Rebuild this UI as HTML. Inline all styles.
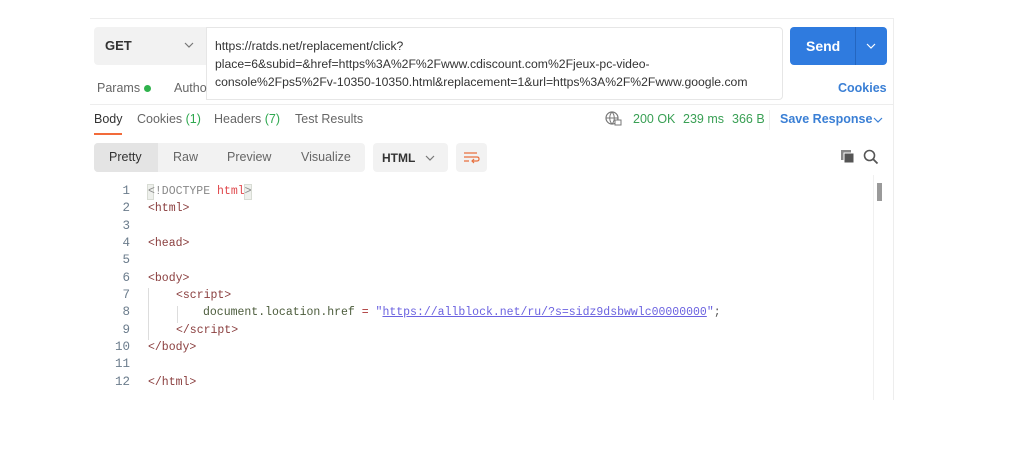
<!DOCTYPE html>
<html><head><style>
*{margin:0;padding:0;box-sizing:border-box}
body{width:1024px;height:474px;background:#fff;font-family:"Liberation Sans",sans-serif;position:relative;overflow:hidden;color:#212121}
.a{position:absolute;white-space:nowrap}
.code{font-family:"Liberation Mono",monospace;font-size:11.5px;}
.ln{position:absolute;width:40px;text-align:right;left:90px;color:#6b7c8c;font-family:"Liberation Mono",monospace;font-size:12.5px}
.tag{color:#8a3e3e}
</style></head><body>
<div class="a" style="left:90px;top:18px;width:803px;height:1px;background:#ededed"></div>
<div class="a" style="left:893px;top:18px;width:1px;height:382px;background:#ededed"></div>
<div class="a" style="left:90px;top:104px;width:803px;height:1px;background:#ededed"></div>
<div class="a" style="left:873px;top:175px;width:1px;height:225px;background:#f0f0f0"></div>

<div class="a" style="left:94px;top:27px;width:112px;height:38px;background:#f2f2f2;border-radius:4px 0 0 4px"></div>
<div class="a" style="left:105px;top:38px;font-size:13px;font-weight:bold;color:#333">GET</div>
<svg class="a" style="left:184px;top:42px" width="10" height="7"><path d="M1 1l4 4 4-4" fill="none" stroke="#777" stroke-width="1.2"/></svg>
<div class="a" style="left:206px;top:27px;width:577px;height:73px;background:#fff;border:1px solid #e6e6e6;border-radius:0 4px 4px 0"></div>
<div class="a" style="left:215px;top:37px;font-size:12.2px;line-height:18px;color:#333">https://ratds.net/replacement/click?<br>place=6&amp;subid=&amp;href=https%3A%2F%2Fwww.cdiscount.com%2Fjeux-pc-video-<br>console%2Fps5%2Fv-10350-10350.html&amp;replacement=1&amp;url=https%3A%2F%2Fwww.google.com</div>
<div class="a" style="left:790px;top:27px;width:97px;height:38px;background:#2f7bdf;border-radius:4px"></div>
<div class="a" style="left:855px;top:27px;width:1px;height:38px;background:#2466c0"></div>
<div class="a" style="left:806px;top:38px;font-size:14px;font-weight:bold;color:#fff">Send</div>
<svg class="a" style="left:866px;top:43px" width="10" height="7"><path d="M1 1l4 4 4-4" fill="none" stroke="#fff" stroke-width="1.2"/></svg>
<div class="a" style="left:97px;top:81px;font-size:12.5px;color:#666">Params</div>
<div class="a" style="left:144px;top:85px;width:7px;height:7px;border-radius:50%;background:#2fb24c"></div>
<div class="a" style="left:174px;top:81px;font-size:12.5px;color:#666">Autho</div>
<div class="a" style="left:838px;top:81px;font-size:12.5px;font-weight:bold;color:#3a7fd5">Cookies</div>

<div class="a" style="left:94px;top:112px;font-size:12.5px;color:#333">Body</div>
<div class="a" style="left:94px;top:133px;width:28px;height:2px;background:#f26b3a"></div>
<div class="a" style="left:137px;top:112px;font-size:12.5px;color:#666">Cookies <span style="color:#2fa84f">(1)</span></div>
<div class="a" style="left:214px;top:112px;font-size:12.5px;color:#666">Headers <span style="color:#2fa84f">(7)</span></div>
<div class="a" style="left:295px;top:112px;font-size:12.5px;color:#666">Test Results</div>
<svg class="a" style="left:605px;top:111px" width="17" height="16"><circle cx="7" cy="7" r="6" fill="none" stroke="#777" stroke-width="1.2"/><path d="M1 7h12M7 1c-3 3-3 9 0 12M7 1c3 3 3 9 0 12" fill="none" stroke="#777" stroke-width="1"/><rect x="10" y="9" width="6" height="5" fill="#fff" stroke="#777"/></svg>
<div class="a" style="left:633px;top:112px;font-size:12.5px;color:#3aa055">200 OK</div>
<div class="a" style="left:683px;top:112px;font-size:12.5px;color:#3aa055">239 ms</div>
<div class="a" style="left:732px;top:112px;font-size:12.5px;color:#3aa055">366 B</div>
<div class="a" style="left:769px;top:110px;width:1px;height:20px;background:#eee"></div>
<div class="a" style="left:780px;top:112px;font-size:12.5px;font-weight:bold;color:#3a7fd5">Save Response</div>
<svg class="a" style="left:873px;top:117px" width="10" height="7"><path d="M1 1l4 4 4-4" fill="none" stroke="#3a7fd5" stroke-width="1.2"/></svg>

<div class="a" style="left:94px;top:143px;width:271px;height:29px;background:#f2f2f2;border-radius:4px"></div>
<div class="a" style="left:94px;top:143px;width:64px;height:29px;background:#e4e4e4;border-radius:4px 0 0 4px"></div>
<div class="a" style="left:109px;top:150px;font-size:12.5px;color:#333">Pretty</div>
<div class="a" style="left:173px;top:150px;font-size:12.5px;color:#666">Raw</div>
<div class="a" style="left:227px;top:150px;font-size:12.5px;color:#666">Preview</div>
<div class="a" style="left:301px;top:150px;font-size:12.5px;color:#666">Visualize</div>
<div class="a" style="left:373px;top:143px;width:75px;height:29px;background:#f2f2f2;border-radius:4px"></div>
<div class="a" style="left:382px;top:151px;font-size:12px;font-weight:bold;color:#333">HTML</div>
<svg class="a" style="left:425px;top:155px" width="10" height="7"><path d="M1 1l4 4 4-4" fill="none" stroke="#777" stroke-width="1.2"/></svg>
<div class="a" style="left:456px;top:143px;width:31px;height:29px;background:#f2f2f2;border-radius:4px"></div>
<svg class="a" style="left:462px;top:150px" width="18" height="15"><path d="M2 3h13M2 7h13q2 0 2 2t-2 2h-5M12 9l-2 2 2 2M2 11h5" fill="none" stroke="#e8703e" stroke-width="1.2"/></svg>
<svg class="a" style="left:840px;top:149px" width="16" height="16"><rect x="1" y="1" width="10" height="10" fill="#888"/><rect x="4" y="4" width="10" height="10" fill="#555" stroke="#fff" stroke-width="1"/></svg>
<svg class="a" style="left:863px;top:149px" width="16" height="16"><circle cx="6.5" cy="6.5" r="5" fill="none" stroke="#555" stroke-width="1.6"/><path d="M10 10l4.5 4.5" stroke="#555" stroke-width="1.8"/></svg>

<div class="a" style="left:877px;top:183px;width:5px;height:18px;background:#9a9a9a"></div>
<div class="a" style="left:147px;top:184px;width:7px;height:16px;background:#eef0ec;border:1px solid #d8dcd4"></div>
<div class="a" style="left:244px;top:184px;width:8px;height:16px;background:#eef0ec;border:1px solid #d8dcd4"></div>
<div class="a" style="left:148px;top:288px;width:1px;height:52px;background:#ddd"></div>
<div class="a" style="left:177px;top:306px;width:1px;height:17px;background:#ddd"></div>
<div class="ln" style="top:184px">1</div>
<div class="ln" style="top:201px">2</div>
<div class="ln" style="top:219px">3</div>
<div class="ln" style="top:236px">4</div>
<div class="ln" style="top:253px">5</div>
<div class="ln" style="top:271px">6</div>
<div class="ln" style="top:288px">7</div>
<div class="ln" style="top:305px">8</div>
<div class="ln" style="top:323px">9</div>
<div class="ln" style="top:340px">10</div>
<div class="ln" style="top:357px">11</div>
<div class="ln" style="top:375px">12</div>
<div class="a code" style="left:148px;top:185px;color:#888">&lt;!DOCTYPE <span style="color:#e0484c">html</span>&gt;</div>
<div class="a code tag" style="left:148px;top:202px">&lt;html&gt;</div>
<div class="a code tag" style="left:148px;top:237px">&lt;head&gt;</div>
<div class="a code tag" style="left:148px;top:272px">&lt;body&gt;</div>
<div class="a code tag" style="left:176px;top:289px">&lt;script&gt;</div>
<div class="a code" style="left:203px;top:306px;color:#4c5c3c">document.location.href <span style="color:#a33">=</span> <span style="color:#6b62e0">"<u>https://allblock.net/ru/?s=sidz9dsbwwlc00000000</u>"</span><span style="color:#555">;</span></div>
<div class="a code tag" style="left:176px;top:324px">&lt;/script&gt;</div>
<div class="a code tag" style="left:148px;top:341px">&lt;/body&gt;</div>
<div class="a code tag" style="left:148px;top:376px">&lt;/html&gt;</div>
</body></html>
